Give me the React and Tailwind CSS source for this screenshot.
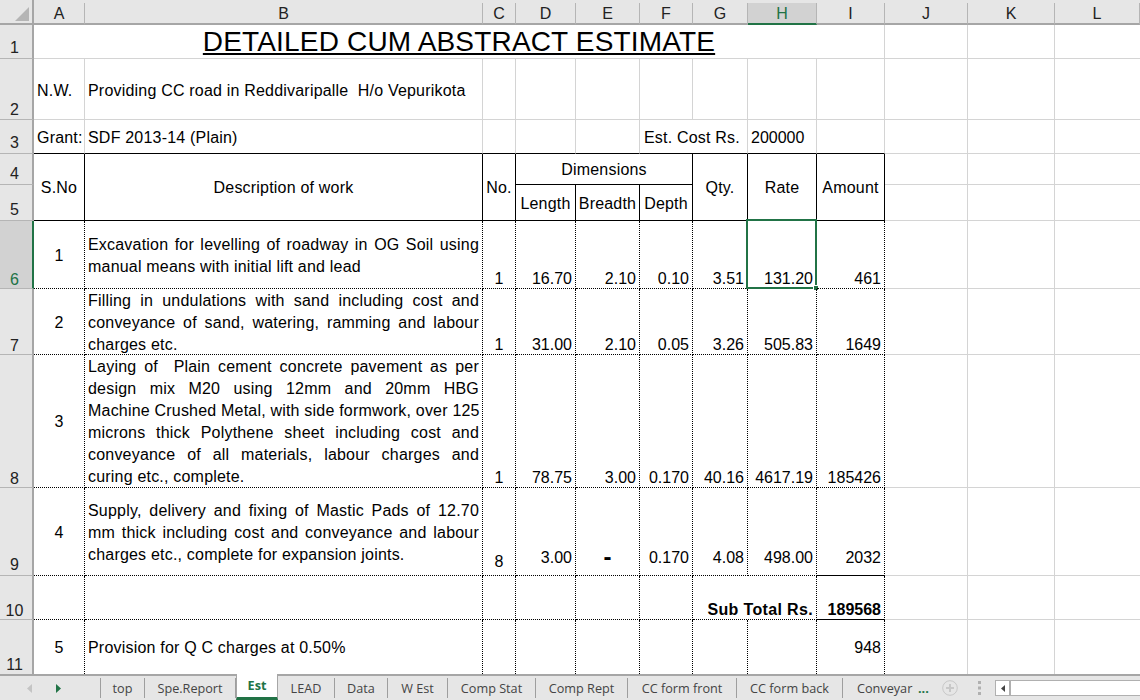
import React from "react";

const FONT = "font-['Liberation_Sans',Arial,sans-serif]";

const COLS = ["A", "B", "C", "D", "E", "F", "G", "H", "I", "J", "K", "L"];

// bordes de las celdas
const GRID = "border-r border-b border-[#d4d4d4]";
const SOLID = "border-r border-b border-black";
const DOT = "border-r border-b border-black border-dotted";
const ROW3 = "border-r border-b border-r-[#d4d4d4] border-b-black";
const TXT = "tracking-[0.2px]";

function Cell({ className = "", children }) {
  return <div className={`relative min-w-0 whitespace-pre text-[16px] text-black ${className}`}>{children}</div>;
}

function Num({ children, className = "" }) {
  return <Cell className={`${DOT} flex items-end justify-end pr-[3px] leading-[18px] ${className}`}>{children}</Cell>;
}

function Desc({ lines }) {
  return (
    <Cell className={`${DOT} ${TXT} flex flex-col justify-center px-[3px] pt-[2px] leading-[22px]`}>
      {lines.map((l, i) => (
        <div key={i} className={`whitespace-pre ${i < lines.length - 1 ? "text-justify [text-align-last:justify]" : ""}`}>{l}</div>
      ))}
    </Cell>
  );
}

// las tres columnas vacias de la derecha
function Blank() {
  return (
    <>
      <div className={GRID} />
      <div className={GRID} />
      <div className="border-b border-[#d4d4d4]" />
    </>
  );
}

function Row({ sno, lines, no, nums }) {
  return (
    <>
      <Cell className={`${DOT} flex items-center justify-center pt-[2px]`}>{sno}</Cell>
      <Desc lines={lines} />
      <Cell className={`${DOT} flex items-end justify-center leading-[18px]`}>{no}</Cell>
      {nums.map((n, i) => (
        <Num key={i}>{n}</Num>
      ))}
      <Blank />
    </>
  );
}

function RowHead({ n, active, lead = "leading-[20px]" }) {
  return (
    <div className={`flex items-end justify-center border-b border-[#b5b5b5] pr-[3px] text-[16px] ${lead} ${active ? "border-r-2 border-r-[#217346] bg-[#d2d2d2] text-[#217346]" : "border-r-2 border-r-[#a6a6a6] bg-[#e6e6e6] text-[#222]"}`}>
      {n}
    </div>
  );
}

function ColHead({ c }) {
  return (
    <div className="flex bg-[#e6e6e6] pt-[3px]">
      <div className={`flex flex-1 items-center justify-center pt-[2px] text-[16px] ${c === "H" ? "border-r border-b-2 border-r-[#b5b5b5] border-b-[#217346] bg-[#d2d2d2] text-[#217346]" : "border-r border-b-2 border-r-[#b5b5b5] border-b-[#a6a6a6] text-[#222]"}`}>
        {c}
      </div>
    </div>
  );
}

const TABS = [
  ["top", "w-[45px] border-l"],
  ["Spe.Report", "w-[91px]"],
  ["Est", ""],
  ["LEAD", "w-[57px]"],
  ["Data", "w-[53px]"],
  ["W Est", "w-[60px]"],
  ["Comp Stat", "w-[88px]"],
  ["Comp Rept", "w-[92px]"],
  ["CC form front", "w-[109px]"],
  ["CC form back", "w-[106px]"],
];

function TabBar() {
  return (
    <div className="flex h-[26px] items-stretch border-t-2 border-[#a6a6a6] bg-[#e6e6e6] font-['Open_Sans',sans-serif] text-[12.67px] text-[#444]">
      <div className="flex w-[100px] shrink-0 items-center gap-[24px] pl-[27px]">
        <svg width="5" height="9" viewBox="0 0 5 9"><path d="M5 0v9L0 4.5z" fill="#c4c4c4" /></svg>
        <svg width="5" height="9" viewBox="0 0 5 9"><path d="M0 0v9l5-4.5z" fill="#217346" /></svg>
      </div>
      {TABS.map(([t, w]) =>
        t === "Est" ? (
          <div key={t} className="-mt-[2px] flex w-[42px] items-center justify-center border-x border-[#a6a6a6] border-b-[3px] border-b-[#217346] bg-white font-bold text-[#217346]">
            {t}
          </div>
        ) : (
          <div key={t} className={`mt-[2px] mb-[2px] flex shrink-0 items-center justify-center border-r border-[#9e9e9e] ${w}`}>
            {t}
          </div>
        )
      )}
      <div className="flex w-[75px] shrink-0 items-center pl-[14px] whitespace-nowrap">Conveyar</div>
      <div className="flex w-[24px] shrink-0 items-center font-bold text-[#217346]">...</div>
      <div className="flex w-[16px] shrink-0 items-center justify-center">
        <svg width="16" height="16" viewBox="0 0 16 16" fill="none" stroke="#c8c8c8"><circle cx="8" cy="8" r="7.3" /><path d="M8 4v8M4 8h8" strokeWidth="2" /></svg>
      </div>
      <div className="flex w-[37px] shrink-0 items-center pl-[20px]">
        <svg width="3" height="14" viewBox="0 0 3 14" fill="#b0b0b0"><rect width="3" height="3" /><rect y="5.5" width="3" height="3" /><rect y="11" width="3" height="3" /></svg>
      </div>
      <div className="flex flex-1 items-center">
        <div className="flex h-[16px] w-full border-y border-l border-[#b0b0b0] bg-white">
          <div className="flex w-[15px] items-center justify-center border-r-2 border-[#b0b0b0]">
            <svg width="4" height="7" viewBox="0 0 4 7"><path d="M4 0v7L0 3.5z" fill="#444" /></svg>
          </div>
        </div>
      </div>
    </div>
  );
}

export default function App() {
  return (
    <div className={`h-[700px] w-[1140px] overflow-hidden bg-white ${FONT}`}>
      <div className="grid h-[674px] grid-cols-[34px_51px_398px_33px_60px_64px_53px_55px_69px_68px_83px_87px_85px] grid-rows-[25px_34px_61px_34px_31px_36px_68px_66px_133px_88px_44px_56px] overflow-hidden">
        {/* encabezado de columnas */}
        <div className="flex items-start justify-end border-r-2 border-b-2 border-[#a6a6a6] bg-[#e6e6e6] pt-[7px] pr-[3px]">
          <svg width="14" height="14" viewBox="0 0 14 14"><path d="M14 0v14H0z" fill="#b5b5b5" /></svg>
        </div>
        {COLS.map((c) => <ColHead key={c} c={c} />)}

        {/* fila 1 */}
        <RowHead n="1" />
        <Cell className={`${GRID} col-span-9 text-center text-[28px] leading-[34px] tracking-[0.17px] underline`}>DETAILED CUM ABSTRACT ESTIMATE</Cell>
        <Blank />

        {/* fila 2 */}
        <RowHead n="2" lead="leading-[18px]" />
        <Cell className={`${GRID} ${TXT} flex items-center pt-[3px] pl-[3px]`}>N.W.</Cell>
        <Cell className={`${GRID} ${TXT} flex items-center pt-[3px] pl-[3px]`}>Providing CC road in Reddivaripalle  H/o Vepurikota</Cell>
        {[0, 1, 2, 3, 4, 5, 6].map((i) => <div key={i} className={GRID} />)}
        <Blank />

        {/* fila 3 */}
        <RowHead n="3" />
        <Cell className={`${ROW3} ${TXT} flex items-center pt-[2px] pl-[3px]`}>Grant:</Cell>
        <Cell className={`${ROW3} ${TXT} flex items-center pt-[2px] pl-[3px]`}>SDF 2013-14 (Plain)</Cell>
        <div className={ROW3} />
        <div className={ROW3} />
        <div className={ROW3} />
        <Cell className={`${ROW3} ${TXT} col-span-2 flex items-center pt-[2px] pl-[4px]`}>Est. Cost Rs.</Cell>
        <Cell className={`${ROW3} flex items-center pt-[2px] pl-[3px]`}>200000</Cell>
        <div className={ROW3} />
        <Blank />

        {/* filas 4 y 5 */}
        <RowHead n="4" />
        <Cell className={`${SOLID} ${TXT} row-span-2 flex items-center justify-center pt-[2px]`}>S.No</Cell>
        <Cell className={`${SOLID} ${TXT} row-span-2 flex items-center justify-center pt-[2px]`}>Description of work</Cell>
        <Cell className={`${SOLID} ${TXT} row-span-2 flex items-center justify-center pt-[2px]`}>No.</Cell>
        <Cell className={`${SOLID} ${TXT} col-span-3 flex items-center justify-center pt-[2px]`}>Dimensions</Cell>
        <Cell className={`${SOLID} ${TXT} row-span-2 flex items-center justify-center pt-[2px]`}>Qty.</Cell>
        <Cell className={`${SOLID} ${TXT} row-span-2 flex items-center justify-center pt-[2px]`}>Rate</Cell>
        <Cell className={`${SOLID} ${TXT} row-span-2 flex items-center justify-center pt-[2px]`}>Amount</Cell>
        <Blank />

        <RowHead n="5" />
        <Cell className={`${SOLID} ${TXT} flex items-center justify-center pt-[2px]`}>Length</Cell>
        <Cell className={`${SOLID} ${TXT} flex items-center justify-center pt-[2px]`}>Breadth</Cell>
        <Cell className={`${SOLID} ${TXT} flex items-center justify-center pt-[2px]`}>Depth</Cell>
        <Blank />

        {/* fila 6, con la celda activa */}
        <RowHead n="6" active lead="leading-[16px]" />
        <Cell className={`${DOT} flex items-center justify-center pt-[2px]`}>1</Cell>
        <Desc lines={["Excavation for levelling of roadway in OG Soil using", "manual means with initial lift and lead"]} />
        <Cell className={`${DOT} flex items-end justify-center leading-[18px]`}>1</Cell>
        <Num>16.70</Num>
        <Num>2.10</Num>
        <Num>0.10</Num>
        <Num>3.51</Num>
        <Num>
          131.20
          <div className="absolute -top-[2px] -right-px -bottom-px -left-[2px] border-2 border-[#217346]" />
          <div className="absolute -right-[3px] -bottom-[3px] h-[6px] w-[6px] border border-white bg-[#217346]" />
        </Num>
        <Num>461</Num>
        <Blank />

        <RowHead n="7" lead="leading-[16px]" />
        <Row sno="2" no="1" lines={["Filling in undulations with sand including cost and", "conveyance of sand, watering, ramming and labour", "charges etc."]} nums={["31.00", "2.10", "0.05", "3.26", "505.83", "1649"]} />

        <RowHead n="8" lead="leading-[16px]" />
        <Row sno="3" no="1" lines={["Laying of  Plain cement concrete pavement as per", "design mix M20 using 12mm and 20mm HBG", "Machine Crushed Metal, with side formwork, over 125", "microns thick Polythene sheet including cost and", "conveyance of all materials, labour charges and", "curing etc., complete."]} nums={["78.75", "3.00", "0.170", "40.16", "4617.19", "185426"]} />

        <RowHead n="9" />
        <Cell className={`${DOT} flex items-center justify-center pt-[2px]`}>4</Cell>
        <Desc lines={["Supply, delivery and fixing of Mastic Pads of 12.70", "mm thick including cost and conveyance and labour", "charges etc., complete for expansion joints."]} />
        <Cell className={`${DOT} flex items-end justify-center pb-[4px] leading-[18px]`}>8</Cell>
        <Num className="pb-[8px]">3.00</Num>
        <Cell className={`${DOT} flex items-end justify-center pb-[7px] text-[24px] leading-[22px] font-bold`}>-</Cell>
        <Num className="pb-[8px]">0.170</Num>
        <Num className="pb-[8px]">4.08</Num>
        <Num className="pb-[8px]">498.00</Num>
        <Num className="pb-[8px] [border-bottom-style:solid]">2032</Num>
        <Blank />

        <RowHead n="10" lead="leading-[16px]" />
        <div className={DOT} />
        <div className={DOT} />
        <div className={DOT} />
        <div className={DOT} />
        <div className={DOT} />
        <div className={DOT} />
        <Cell className={`${DOT} col-span-2 flex items-end justify-end pr-[3px] leading-[18px] font-bold tracking-[0.35px]`}>Sub Total Rs.</Cell>
        <Cell className={`${DOT} flex items-end justify-end pr-[3px] leading-[18px] font-bold [border-bottom-style:solid]`}>189568</Cell>
        <Blank />

        <RowHead n="11" />
        <Cell className={`${DOT} flex items-center justify-center`}>5</Cell>
        <Cell className={`${DOT} ${TXT} flex items-center pl-[3px]`}>Provision for Q C charges at 0.50%</Cell>
        <div className={DOT} />
        <div className={DOT} />
        <div className={DOT} />
        <div className={DOT} />
        <div className={DOT} />
        <div className={DOT} />
        <Cell className={`${DOT} flex items-center justify-end pr-[3px]`}>948</Cell>
        <Blank />
      </div>
      <TabBar />
    </div>
  );
}
